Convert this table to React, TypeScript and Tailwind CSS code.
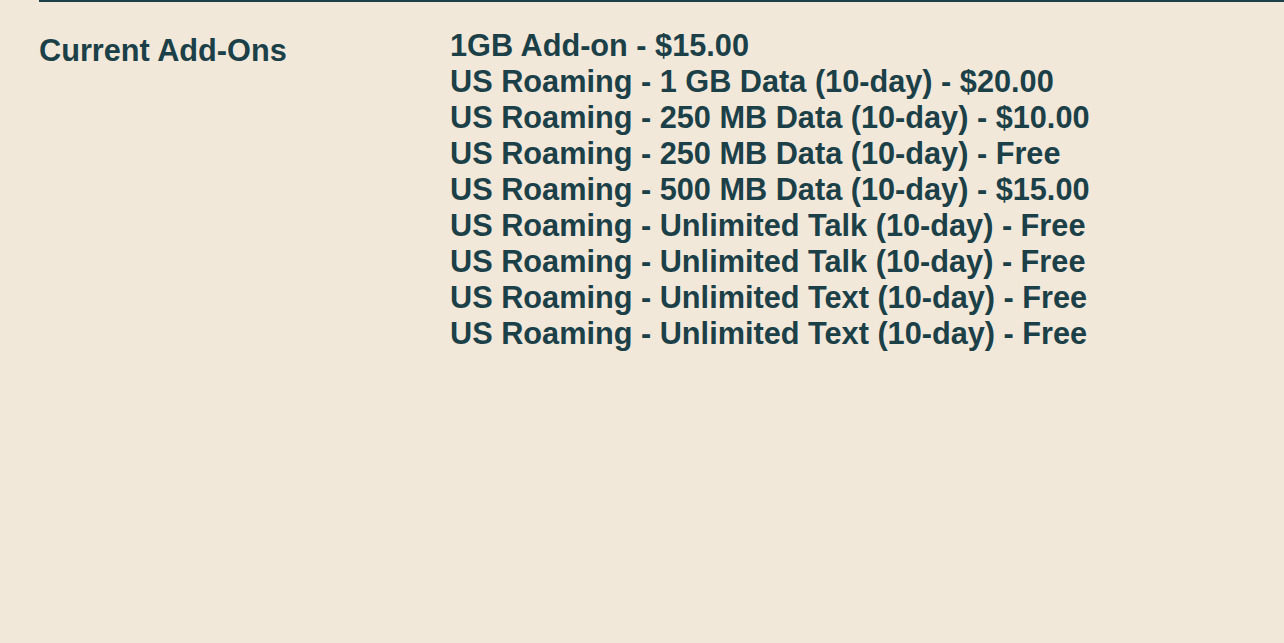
const ADDONS = [
  '1GB Add-on - $15.00',
  'US Roaming - 1 GB Data (10-day) - $20.00',
  'US Roaming - 250 MB Data (10-day) - $10.00',
  'US Roaming - 250 MB Data (10-day) - Free',
  'US Roaming - 500 MB Data (10-day) - $15.00',
  'US Roaming - Unlimited Talk (10-day) - Free',
  'US Roaming - Unlimited Talk (10-day) - Free',
  'US Roaming - Unlimited Text (10-day) - Free',
  'US Roaming - Unlimited Text (10-day) - Free',
];

export default function App() {
  return (
    <div
      className="min-h-screen bg-[#f2e8da] pl-[39px] text-[#1b4047]"
      style={{ fontFamily: '"Liberation Sans", Arial, sans-serif' }}
    >
      <div className="border-t-2 border-[#1b4047] pt-[26px]">
        <div className="flex">
          <div className="w-[411px] shrink-0 pt-[5px] text-[30.7px] font-bold leading-[36px]">Current Add-Ons</div>
          <ul className="flex flex-col">
            {ADDONS.map((a, i) => (
              <li key={i} className="text-[30.7px] font-bold leading-[36px]">
                {a}
              </li>
            ))}
          </ul>
        </div>
      </div>
    </div>
  );
}
